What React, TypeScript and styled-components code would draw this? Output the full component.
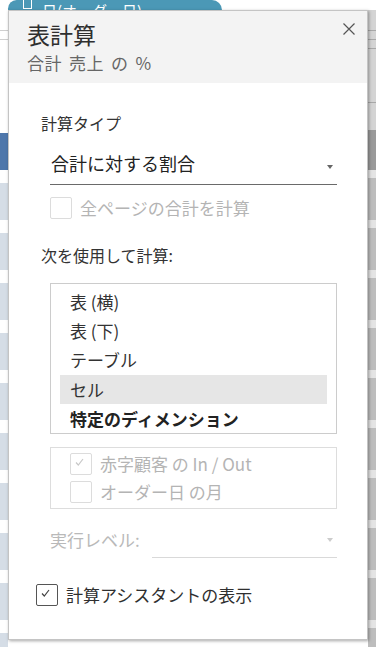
import React from 'react';
import styled, { createGlobalStyle } from 'styled-components';

const GlobalStyle = createGlobalStyle`
  * { box-sizing: border-box; }
  html, body { margin: 0; padding: 0; background: #ffffff; }
  body {
    font-family: "Noto Sans CJK JP", "Noto Sans", "Liberation Sans", sans-serif;
    color: #333333;
    overflow: hidden;
  }
`;

const Page = styled.div`
  width: 376px;
  height: 647px;
  display: grid;
  grid-template-columns: 8px 360px 8px;
  grid-template-rows: 10px 630px 7px;
  background: #ffffff;
`;

const Pill = styled.div`
  grid-column: 2 / 3;
  grid-row: 1;
  width: 214px;
  height: 10px;
  background: #4b98b6;
  border-top-left-radius: 12px;
  border-top-right-radius: 14px;
  overflow: hidden;
  color: #ffffff;
  font-size: 15px;
  line-height: 10px;
  padding-left: 15px;
  white-space: nowrap;
  display: flex;
  align-items: flex-end;
  gap: 10px;
`;

const PillIcon = styled.span`
  width: 9px;
  height: 12px;
  border: 1.5px solid #ffffff;
  margin-bottom: 1px;
  flex-shrink: 0;
`;

const PillText = styled.span`
  display: block;
  transform: translateY(6px);
`;

const LeftStrip = styled.div`
  grid-column: 1;
  grid-row: 1 / 4;
  background:
    linear-gradient(
      #ffffff 0, #ffffff 30px, #cfcfcf 30px, #cfcfcf 31px, #ffffff 31px,
      #ffffff 39px, #cfcfcf 39px, #cfcfcf 40px, #ffffff 40px,
      #ffffff 133px, #4e77ab 133px, #4e77ab 170px, transparent 170px
    ),
    repeating-linear-gradient(#ffffff 0, #ffffff 13px, #d5dde6 13px, #d5dde6 50px);
  background-position: 0 0, 0 20px;
`;

const RightStrip = styled.div`
  grid-column: 3;
  grid-row: 1 / 4;
  background:
    linear-gradient(
      #ffffff 0, #ffffff 10px, #d4d4d4 10px, #d4d4d4 30px, #a8a8a8 30px, #a8a8a8 31px,
      #d4d4d4 31px, #d4d4d4 39px, #a8a8a8 39px, #a8a8a8 40px, #d4d4d4 40px,
      #d4d4d4 48px, #a8a8a8 48px, #a8a8a8 49px, #d4d4d4 49px, #d4d4d4 102px,
      #a8a8a8 102px, #a8a8a8 103px, #d4d4d4 103px, #d4d4d4 130px,
      #9a9a9a 130px, #9a9a9a 170px, transparent 170px
    ),
    repeating-linear-gradient(#e4e4e4 0, #e4e4e4 8px, #bdbdbd 8px, #bdbdbd 50px);
  background-position: 0 0, 0 20px;
`;

const Panel = styled.div`
  grid-column: 2;
  grid-row: 2;
  background: #ffffff;
  border: 1px solid #c4c4c4;
  box-shadow: 1px 1px 3px rgba(0, 0, 0, 0.35);
  display: flex;
  flex-direction: column;
  position: relative;
  z-index: 1;
`;

const Header = styled.div`
  background: #f3f3f3;
  height: 72px;
  padding: 8px 6px 0 18px;
  display: flex;
  justify-content: space-between;
  align-items: flex-start;
`;

const Titles = styled.div`
  display: flex;
  flex-direction: column;
`;

const Title = styled.div`
  font-size: 23px;
  line-height: 30px;
  color: #2f2f2f;
`;

const Subtitle = styled.div`
  font-size: 17px;
  line-height: 24px;
  margin-top: 2px;
  color: #666666;
  letter-spacing: 0.4px;
  word-spacing: 3px;
`;

const CloseButton = styled.button`
  border: none;
  background: none;
  padding: 0;
  margin-top: -2px;
  width: 24px;
  height: 24px;
  display: flex;
  align-items: center;
  justify-content: center;
  cursor: pointer;
`;

const Body = styled.div`
  padding: 28px 30px 0 32px;
  display: flex;
  flex-direction: column;
`;

const Label = styled.div<{ $muted?: boolean }>`
  font-size: ${(p) => (p.$muted ? '17px' : '16px')};
  line-height: 24px;
  color: ${(p) => (p.$muted ? '#b9b9b9' : '#333333')};
  white-space: nowrap;
`;

const Select = styled.div<{ $muted?: boolean }>`
  display: flex;
  align-items: center;
  justify-content: space-between;
  height: 38px;
  padding: 0 2px 6px 1px;
  border-bottom: 1px solid ${(p) => (p.$muted ? '#d9d9d9' : '#6a6a6a')};
  font-size: 18px;
  color: #222222;
`;

const LevelSelect = styled(Select)`
  flex: 1;
`;

const Caret = styled.span<{ $muted?: boolean }>`
  width: 0;
  height: 0;
  border-left: 3px solid transparent;
  border-right: 3px solid transparent;
  border-top: 4px solid ${(p) => (p.$muted ? '#cccccc' : '#666666')};
  margin: 8px 2px 0 0;
`;

const CheckRow = styled.label<{ $muted?: boolean }>`
  display: flex;
  align-items: center;
  gap: 8px;
  font-size: 17px;
  line-height: 28px;
  color: ${(p) => (p.$muted ? '#b4b4b4' : '#2f2f2f')};
  white-space: nowrap;
`;

const Box = styled.span<{ $muted?: boolean }>`
  width: 22px;
  height: 22px;
  border: 1px solid ${(p) => (p.$muted ? '#dcdcdc' : '#555555')};
  border-radius: 2px;
  background: #ffffff;
  display: flex;
  align-items: flex-start;
  justify-content: flex-start;
  padding: 4px 0 0 4px;
  flex-shrink: 0;
`;

const Indented = styled.div`
  padding-left: 9px;
  display: flex;
  flex-direction: column;
`;

const ListBox = styled.div`
  border: 1px solid #cccccc;
  height: 151px;
  padding: 3px 9px 0 9px;
  display: flex;
  flex-direction: column;
`;

const ListItem = styled.div<{ $selected?: boolean; $bold?: boolean }>`
  height: 29.5px;
  line-height: 29px;
  padding-left: 10px;
  font-size: 17px;
  font-weight: ${(p) => (p.$bold ? 700 : 400)};
  color: ${(p) => (p.$bold ? '#222222' : '#333333')};
  background: ${(p) => (p.$selected ? '#e6e6e6' : 'transparent')};
`;

const DimBox = styled.div`
  border: 1px solid #dddddd;
  height: 62px;
  margin-top: 13px;
  padding: 2px 0 0 19px;
  display: flex;
  flex-direction: column;
`;

const LevelRow = styled.div`
  display: flex;
  align-items: flex-end;
  gap: 12px;
  margin-top: 11px;
`;

const Check: React.FC<{ color: string }> = ({ color }) => (
  <svg width="9" height="8" viewBox="0 0 9 8">
    <path d="M1 4.5 L3.3 7 L8 1" fill="none" stroke={color} strokeWidth="1.2" />
  </svg>
);

const App: React.FC = () => {
  const items = ['表 (横)', '表 (下)', 'テーブル', 'セル', '特定のディメンション'];
  return (
    <>
      <GlobalStyle />
      <Page>
        <LeftStrip />
        <Pill>
          <PillIcon />
          <PillText>日(オーダー日)</PillText>
        </Pill>
        <Panel>
          <Header>
            <Titles>
              <Title>表計算</Title>
              <Subtitle>合計 売上 の %</Subtitle>
            </Titles>
            <CloseButton aria-label="close">
              <svg width="12" height="12" viewBox="0 0 12 12">
                <path d="M0.5 0.5 L11.5 11.5 M11.5 0.5 L0.5 11.5" stroke="#555555" strokeWidth="1.2" />
              </svg>
            </CloseButton>
          </Header>
          <Body>
            <Label>計算タイプ</Label>
            <Indented style={{ marginTop: 12 }}>
              <Select>
                <span>合計に対する割合</span>
                <Caret />
              </Select>
              <CheckRow $muted style={{ marginTop: 9 }}>
                <Box $muted />
                全ページの合計を計算
              </CheckRow>
            </Indented>
            <Label style={{ marginTop: 21 }}>次を使用して計算:</Label>
            <Indented style={{ marginTop: 16 }}>
              <ListBox>
                {items.map((t, i) => (
                  <ListItem key={t} $selected={i === 3} $bold={i === 4}>
                    {t}
                  </ListItem>
                ))}
              </ListBox>
              <DimBox>
                <CheckRow $muted>
                  <Box $muted>
                    <Check color="#c8c8c8" />
                  </Box>
                  赤字顧客 の In / Out
                </CheckRow>
                <CheckRow $muted>
                  <Box $muted />
                  オーダー日 の月
                </CheckRow>
              </DimBox>
              <LevelRow>
                <Label $muted style={{ paddingBottom: 6 }}>実行レベル:</Label>
                <LevelSelect $muted>
                  <span />
                  <Caret $muted />
                </LevelSelect>
              </LevelRow>
            </Indented>
            <CheckRow style={{ marginTop: 23, marginLeft: -5 }}>
              <Box>
                <Check color="#444444" />
              </Box>
              計算アシスタントの表示
            </CheckRow>
          </Body>
        </Panel>
        <RightStrip />
      </Page>
    </>
  );
};

export default App;
